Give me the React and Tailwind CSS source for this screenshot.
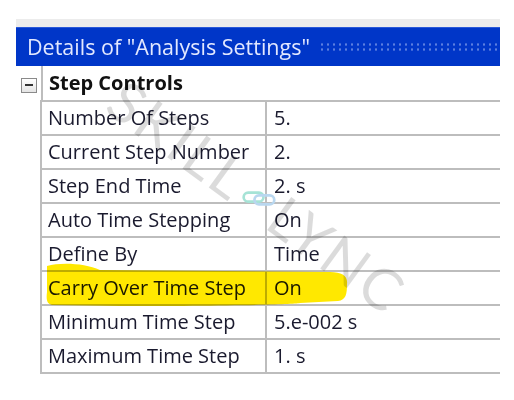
import React from 'react';

const rows = [
  ['Number Of Steps', '5.'],
  ['Current Step Number', '2.'],
  ['Step End Time', '2. s'],
  ['Auto Time Stepping', 'On'],
  ['Define By', 'Time'],
  ['Carry Over Time Step', 'On'],
  ['Minimum Time Step', '5.e-002 s'],
  ['Maximum Time Step', '1. s'],
];

export default function App() {
  return (
    <div className="relative w-[514px] h-[400px] overflow-hidden bg-white font-['Open_Sans',sans-serif] text-[#1a1a2e]">
      <div className="ml-[16px] mt-[19px] w-[484px]">
        {/* title bar */}
        <div className="h-[8px] bg-[#ececec]" />
        <div className="flex h-[39px] items-center bg-[#0036c8] pl-[11px] border-t border-[#2a58d8]">
          <span className="text-[21.5px] leading-none text-[#e2e8ff] whitespace-nowrap">Details of "Analysis Settings"</span>
          <div className="ml-[9px] h-[11px] flex-1 bg-[radial-gradient(circle,#5c7fe0_1px,transparent_1.3px)] bg-[length:6px_5px]" />
        </div>

        {/* group header */}
        <div className="flex h-[34px]">
          <div className="flex w-[25px] items-center justify-center pt-[4px]">
            <div className="flex h-[15px] w-[16px] items-center justify-center border border-[#8a8a8a] bg-gradient-to-b from-white to-[#e4e4e4]">
              <div className="h-[2px] w-[8px] bg-[#333]" />
            </div>
          </div>
          <div className="flex flex-1 items-center border-l-2 border-[#bdbdbd] pl-[6px] text-[20px] font-bold text-[#111]">
            Step Controls
          </div>
        </div>

        {/* property rows */}
        <div className="ml-[24px] border-l-2 border-b-2 border-[#bdbdbd]">
          {rows.map(([k, v]) => (
            <div key={k} className="flex h-[34px] border-t-2 border-[#bdbdbd] text-[20px] font-medium">
              <div className="flex w-[225px] items-center border-r-2 border-[#bdbdbd] pl-[6px] whitespace-nowrap">{k}</div>
              <div className="flex flex-1 items-center pl-[7px]">{v}</div>
            </div>
          ))}
        </div>
      </div>

      {/* yellow marker highlight */}
      <svg className="absolute left-0 top-0 mix-blend-multiply pointer-events-none" width="514" height="400">
        <path
          d="M47 266 C60 262 85 263 100 270 L330 272 C342 272 348 276 347 284 C347 294 346 300 338 301 L300 303 C290 305 200 306 120 306 L52 305 C47 304 46 300 47 292 Z"
          fill="#ffe800"
        />
      </svg>

      {/* watermark */}
      <div className="absolute left-[132px] top-[70px] origin-top-left rotate-[36deg] flex items-center whitespace-nowrap font-['Lato',sans-serif] font-normal text-[57px] leading-none tracking-[3px] text-black/[0.14] pointer-events-none">
        <span>SKILL</span>
        <svg width="36" height="28" viewBox="0 0 40 30" className="mx-[2px] -rotate-[36deg]">
          <rect x="3" y="9" width="22" height="10" rx="5" fill="none" stroke="#a6e3d6" strokeWidth="3" />
          <rect x="15" y="12" width="22" height="10" rx="5" fill="none" stroke="#b9d7ef" strokeWidth="3" />
        </svg>
        <span>LYNC</span>
      </div>
    </div>
  );
}
